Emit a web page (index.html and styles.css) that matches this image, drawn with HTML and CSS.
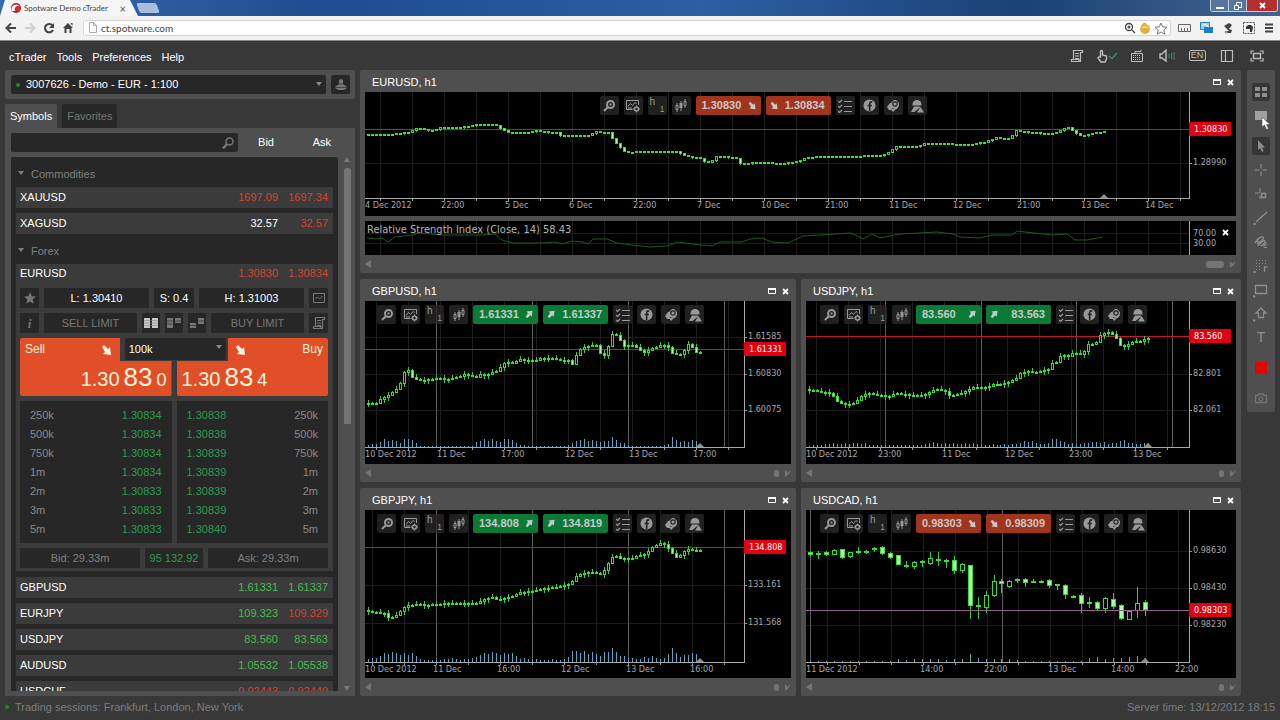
FILE: index.html
```html
<!DOCTYPE html>
<html lang="en">
<head>
    <meta charset="UTF-8">
    <meta name="viewport" content="width=device-width, initial-scale=1.0">
    <title>Spotware Demo cTrader</title>
    <link rel="stylesheet" href="styles.css">
</head>
<body>
    <!-- Icon set -->
    <svg class="sprite" aria-hidden="true">
        <symbol id="i-arrow-dn" viewBox="0 0 12 12"><path d="M1 3l2-2 4 4 2-2 1 8-8-1 2-2z" fill="currentColor"/></symbol>
        <symbol id="i-arrow-up" viewBox="0 0 12 12"><path d="M1 9l2 2 4-4 2 2 1-8-8 1 2 2z" fill="currentColor"/></symbol>
        <symbol id="i-zoom" viewBox="0 0 14 14"><circle cx="8.5" cy="5.5" r="3.5" fill="none" stroke="currentColor" stroke-width="2"/><path d="M6 8l-4 4M7.5 5.5h2M8.5 4.5v2" stroke="currentColor" stroke-width="2"/></symbol>
        <symbol id="i-search" viewBox="0 0 14 14"><circle cx="8.5" cy="5.5" r="3.5" fill="none" stroke="currentColor" stroke-width="1.5"/><path d="M6 8l-4 4.500" stroke="currentColor" stroke-width="2.500"/></symbol>
        <symbol id="i-template" viewBox="0 0 14 14"><path d="M6.500 10.500H.500v-9h12V6M2 7.500l2.500-3 2 2 2.500-3 1.500 1M2 9h4" fill="none" stroke="currentColor"/><circle cx="10.500" cy="10" r="2" fill="none" stroke="currentColor" stroke-width="1.600"/><path d="M10.500 6.500v1.500M10.500 12v1.500M7 10h1.500M12.500 10H14" stroke="currentColor"/></symbol>
        <symbol id="i-candles" viewBox="0 0 14 14"><path d="M3 4v9M7 2v10M11 0v9" stroke="currentColor"/><path d="M2 6.500h2v4H2zM10 2.500h2v4h-2z" fill="#262626" stroke="currentColor"/><path d="M5.500 4h3v5h-3z" fill="currentColor"/></symbol>
        <symbol id="i-checks" viewBox="0 0 14 14"><path d="M0 2l1.500 1.500L4 1M0 7l1.500 1.500L4 6M0 12l1.500 1.500L4 11M6 2.500h8M6 7.500h8M6 12.500h8" fill="none" stroke="currentColor" stroke-width="1.200"/></symbol>
        <symbol id="i-func" viewBox="0 0 14 14"><circle cx="7" cy="7" r="6.500" fill="currentColor"/><path d="M10 3.500c-2-1-2.800 0-2.800 2V13M5 7h4.500" fill="none" stroke="#222" stroke-width="1.700"/></symbol>
        <symbol id="i-shapes" viewBox="0 0 14 14"><path d="M1 8l3-4h2v7H3z" fill="currentColor"/><path d="M5 9V4l3-3h2l3 3v3l-2 3H9z" fill="currentColor"/><circle cx="9" cy="5" r="2.200" fill="none" stroke="#222" stroke-width="1.200"/><path d="M5 10l5 0-3 3z" fill="currentColor"/></symbol>
        <symbol id="i-person" viewBox="0 0 14 14"><path d="M2.500 5.500a4.500 4.500 0 0 1 9 0v1h-9z" fill="currentColor"/><path d="M4 7.500h6v1L4.500 13H1l1-2zM10.500 8L14 13.500H7z" fill="currentColor"/></symbol>
        <symbol id="i-max" viewBox="0 0 8 7"><path d="M.5.5h7v5h-7z" fill="none" stroke="#fff"/><path d="M0 0h8v2H0z" fill="#fff"/></symbol>
        <symbol id="i-close" viewBox="0 0 7 7"><path d="M1 1l5 5M6 1L1 6" stroke="#fff" stroke-width="1.800"/></symbol>
        <symbol id="i-left" viewBox="0 0 6 8"><path d="M6 0v8L0 4z" fill="currentColor"/></symbol>
        <symbol id="i-end" viewBox="0 0 8 8"><path d="M1 0v8l4-3 3-5-4 3z" fill="currentColor"/></symbol>
        <symbol id="i-scroll" viewBox="0 0 14 14"><path d="M3.500 1.500h9v2h-2v9h-9v-2h2zM5 4.500h4M5 7h4M5 9.500h4M2 10.500h7v2" fill="none" stroke="currentColor" stroke-width="1.200"/></symbol>
    </svg>

    <header class="browser">
        <div class="titlebar">
            <div class="browser-tab">
                <svg width="10" height="10" viewBox="0 0 10 10" aria-hidden="true"><circle cx="5" cy="5" r="5" fill="#c4161c"/><path d="M1 8a4 4 0 0 1 8-4 3 3 0 0 0-5 1 2 2 0 0 0 2 3z" fill="#fff"/><circle cx="7" cy="6" r="2" fill="#d9363b"/></svg>
                <span class="browser-tab-title">Spotware Demo cTrader</span>
                <button class="tab-close" aria-label="Close tab">×</button>
            </div>
            <button class="new-tab" aria-label="New tab"></button>
            <div class="window-buttons">
                <button aria-label="Minimize"><svg width="8" height="8"><path d="M0 5h8v2H0z" fill="#fff"/></svg></button>
                <button aria-label="Restore"><svg width="8" height="8"><path d="M2.500 3V.5h5v5H5M.5 3.500h4v4h-4z" fill="none" stroke="#fff"/></svg></button>
                <button class="window-close" aria-label="Close window"><svg width="7" height="7"><use href="#i-close"/></svg></button>
            </div>
        </div>
        <div class="addressbar">
            <button aria-label="Back"><svg width="12" height="12"><path d="M11 6H2M6 1.500L1.500 6 6 10.500" fill="none" stroke="#444" stroke-width="2"/></svg></button>
            <button aria-label="Forward"><svg width="12" height="12"><path d="M1 6h9M6 1.500L10.500 6 6 10.500" fill="none" stroke="#d0d0d0" stroke-width="2"/></svg></button>
            <button aria-label="Reload"><svg width="12" height="12"><path d="M9.500 3.500A4.200 4.200 0 1 0 10 8" fill="none" stroke="#444" stroke-width="2"/><path d="M11 1v5H6z" fill="#444"/></svg></button>
            <button aria-label="Home"><svg width="12" height="12"><path d="M6 1l5 5H9.500v5h-2V7h-3v4h-2V6H1zM8.500 1h2v3z" fill="#444"/></svg></button>
            <div class="omnibox">
                <svg width="10" height="12" aria-hidden="true"><path d="M1.500.5h4l3 3v7h-7zM5.500.5v3h3" fill="#fff" stroke="#aaa"/></svg>
                <input type="text" aria-label="Address" value="ct.spotware.com">
                <svg width="12" height="12" aria-hidden="true"><circle cx="5" cy="5" r="3.500" fill="none" stroke="#444" stroke-width="1.300"/><path d="M3.500 5h3M5 3.500v3M8 8l3 3" stroke="#444" stroke-width="1.300"/></svg>
                <svg width="12" height="12" aria-hidden="true"><path d="M3 4a2.500 2.500 0 0 1 4-2" fill="none" stroke="#888"/><circle cx="6" cy="7" r="5" fill="#e0b040"/><path d="M2 6c2-2 6-2 8 0z" fill="#f6dd8c"/></svg>
                <svg width="14" height="13" aria-hidden="true"><path d="M7 1l1.700 3.800 4.300.4-3.200 2.800 1 4.200L7 10l-3.800 2.200 1-4.200L1 5.200l4.300-.4z" fill="#fff" stroke="#777"/></svg>
            </div>
            <div class="extensions">
                <button aria-label="Ruler"><svg width="13" height="12"><path d="M.5 2.500h12v7H.5zM3.500 9V6M6.500 9V6M9.500 9V6" fill="none" stroke="#666"/></svg></button>
                <button aria-label="Screens"><svg width="13" height="13"><path d="M.5.500h9v7h-9z" fill="#9fd0ef" stroke="#2380bd"/><path d="M4 5h9v6H4z" fill="#1f7fc0"/><path d="M2 4l3-2 4 3" fill="none" stroke="#fff"/></svg></button>
                <button aria-label="Robot"><svg width="12" height="13"><path d="M2 4l5-3 3 2-3 4 3 1-1 3H4v-2h3L4 6z" fill="#444"/><circle cx="4" cy="10" r="1.500" fill="#999"/></svg></button>
                <button aria-label="Notes"><svg width="12" height="13"><path d="M.5.500h11v11H.5z" fill="none" stroke="#555" stroke-dasharray="2 1"/><path d="M3 5l2-2h3l2 2-1 5H7V7H3z" fill="#333"/></svg></button>
                <button aria-label="Menu"><svg width="10" height="12"><path d="M1 2.500h8M1 6h8M1 9.500h8" stroke="#444" stroke-width="2"/></svg></button>
            </div>
        </div>
    </header>

    <nav class="menubar">
        <a href="#">cTrader</a>
        <a href="#">Tools</a>
        <a href="#">Preferences</a>
        <a href="#">Help</a>
        <div class="menu-tools">
            <button aria-label="Journal"><svg width="14" height="14"><use href="#i-scroll"/></svg></button>
            <button aria-label="Quick trade"><svg width="22" height="14"><path d="M4.500 8V2.500a1 1 0 0 1 2 0V6l4 1v3l-1.500 3h-4L2 9l1-1z" fill="none" stroke="currentColor" stroke-width="1.400"/><path d="M13 7l3 2.500L21 4" fill="none" stroke="#3c8c5e" stroke-width="1.500"/></svg></button>
            <button aria-label="Hotkeys"><svg width="14" height="14"><path d="M1.500 4.500h11v8h-11zM5 4.500V2.500h6V1" fill="none" stroke="currentColor"/><path d="M3 6.500h8M3 8.500h8M3 10.500h8" stroke="currentColor" stroke-dasharray="1 1"/></svg></button>
            <button aria-label="Sound"><svg width="18" height="14"><path d="M2 5h2l4-4v11L4 9H2z" fill="none" stroke="currentColor" stroke-width="1.400"/><path d="M11 5v4M13.500 4v6M16 3v8" stroke="#3c8c5e"/></svg></button>
            <button aria-label="Language"><span class="lang">EN</span></button>
            <button aria-label="Layout"><svg width="14" height="14"><path d="M1.500 1.500h11v11h-11zM5.500 1.500v11" fill="none" stroke="currentColor" stroke-width="1.200"/></svg></button>
            <button aria-label="Full screen"><svg width="14" height="14"><path d="M3.500 4.500h7v5h-7z" fill="none" stroke="currentColor" stroke-width="1.500"/><path d="M1 5V2h3M10 2h3v3M13 9v3h-3M4 12H1V9" fill="none" stroke="currentColor" stroke-width="1.200"/></svg></button>
        </div>
    </nav>

    <main class="workspace">
        <aside class="sidebar">
            <div class="account">
                <div class="account-select">
                    <select aria-label="Account">
                        <option>3007626 - Demo - EUR - 1:100</option>
                    </select>
                </div>
                <button class="account-user" aria-label="Account details"><svg width="14" height="14"><path d="M5 2l2-1 2 1v4l4 3v1l-3 2H4l-3-2V9l4-3z" fill="#777"/><path d="M1 9.500h12M5 6h4" stroke="#444"/></svg></button>
            </div>

            <div class="tabs">
                <button class="tab active">Symbols</button>
                <button class="tab">Favorites</button>
            </div>

            <section class="symbols">
                <div class="symbols-head">
                    <div class="search-box">
                        <input type="text" aria-label="Search symbols">
                        <svg width="14" height="14" aria-hidden="true"><use href="#i-search"/></svg>
                    </div>
                    <span>Bid</span>
                    <span>Ask</span>
                </div>
                <div class="symbols-body">
                    <div class="symbol-list">
                        <button class="group-title">Commodities</button>
                        <table class="quotes">
                            <tr><th>XAUUSD</th><td class="down">1697.09</td><td class="down">1697.34</td></tr>
                            <tr><th>XAGUSD</th><td>32.57</td><td class="down">32.57</td></tr>
                        </table>
                        <button class="group-title">Forex</button>

                        <!-- Expanded symbol -->
                        <div class="expanded">
                            <table class="quotes">
                                <tr><th>EURUSD</th><td class="down">1.30830</td><td class="down">1.30834</td></tr>
                            </table>
                            <div class="stat-row">
                                <button class="cell" aria-label="Favorite"><svg width="12" height="12"><path d="M6 0l1.700 4.200 4.300.3-3.300 2.800 1 4.500L6 9.500l-3.700 2.300 1-4.500L0 4.500l4.300-.3z" fill="currentColor"/></svg></button>
                                <span class="cell">L: 1.30410</span>
                                <span class="cell">S: 0.4</span>
                                <span class="cell">H: 1.31003</span>
                                <button class="cell" aria-label="Open chart"><svg width="14" height="12"><path d="M1 1.500h12M1.500 2v8.500h11V2M3.500 7l2-2 2 2 3-3" fill="none" stroke="currentColor"/></svg></button>
                            </div>
                            <div class="limit-row">
                                <button class="cell info" aria-label="Symbol info">i</button>
                                <button class="cell">SELL LIMIT</button>
                                <button class="cell lit" aria-label="Full depth"><svg width="14" height="12"><path d="M0 1h6v10H0zM8 1h6v10H8z" fill="currentColor"/><path d="M0 3.500h14M0 6h14M0 8.500h14" stroke="#888" stroke-width=".6"/></svg></button>
                                <button class="cell" aria-label="Price depth"><svg width="14" height="12"><path d="M0 1h6v10H0zM8 1h6v5H8z" fill="currentColor"/><path d="M0 4h14M0 7h6" stroke="#262626" stroke-width=".6"/></svg></button>
                                <button class="cell" aria-label="Average depth"><svg width="14" height="12"><path d="M0 6h6v5H0zM8 1h6v6H8z" fill="currentColor"/><path d="M0 8.500h6M8 4h6" stroke="#262626" stroke-width=".6"/></svg></button>
                                <button class="cell">BUY LIMIT</button>
                                <button class="cell" aria-label="Order journal"><svg width="14" height="14"><use href="#i-scroll"/></svg></button>
                            </div>
                            <div class="deal">
                                <button class="deal-side sell">
                                    <span class="deal-head"><span>Sell</span><svg width="12" height="12"><use href="#i-arrow-dn"/></svg></span>
                                    <span class="deal-price"><span>1.30</span><b>83</b><small>0</small></span>
                                </button>
                                <button class="deal-side buy">
                                    <span class="deal-head"><svg width="12" height="12"><use href="#i-arrow-dn"/></svg><span>Buy</span></span>
                                    <span class="deal-price"><span>1.30</span><b>83</b><small>4</small></span>
                                </button>
                                <div class="amount">
                                    <select aria-label="Amount">
                                        <option>100k</option>
                                    </select>
                                </div>
                            </div>
                            <div class="depth">
                                <table>
                                    <tr><th>250k</th><td>1.30834</td></tr>
                                    <tr><th>500k</th><td>1.30834</td></tr>
                                    <tr><th>750k</th><td>1.30834</td></tr>
                                    <tr><th>1m</th><td>1.30834</td></tr>
                                    <tr><th>2m</th><td>1.30833</td></tr>
                                    <tr><th>3m</th><td>1.30833</td></tr>
                                    <tr><th>5m</th><td>1.30833</td></tr>
                                </table>
                                <table>
                                    <tr><td>1.30838</td><th>250k</th></tr>
                                    <tr><td>1.30838</td><th>500k</th></tr>
                                    <tr><td>1.30839</td><th>750k</th></tr>
                                    <tr><td>1.30839</td><th>1m</th></tr>
                                    <tr><td>1.30839</td><th>2m</th></tr>
                                    <tr><td>1.30839</td><th>3m</th></tr>
                                    <tr><td>1.30840</td><th>5m</th></tr>
                                </table>
                            </div>
                            <div class="volume-row">
                                <span class="cell">Bid: 29.33m</span>
                                <span class="cell green">95 132.92</span>
                                <span class="cell">Ask: 29.33m</span>
                            </div>
                        </div>

                        <table class="quotes">
                            <tr><th>GBPUSD</th><td class="up">1.61331</td><td class="up">1.61337</td></tr>
                            <tr><th>EURJPY</th><td class="up">109.323</td><td class="down">109.329</td></tr>
                            <tr><th>USDJPY</th><td class="up">83.560</td><td class="up">83.563</td></tr>
                            <tr><th>AUDUSD</th><td class="up">1.05532</td><td class="up">1.05538</td></tr>
                            <tr><th>USDCHF</th><td class="down">0.92443</td><td class="down">0.92449</td></tr>
                        </table>
                    </div>
                    <div class="scrollbar" aria-hidden="true">
                        <i class="scroll-up"></i>
                        <i class="scroll-thumb"></i>
                        <i class="scroll-down"></i>
                    </div>
                </div>
            </section>
        </aside>

        <!-- Chart panels are filled in by charts.js -->
        <div class="charts" id="charts"></div>

        <div class="toolbox" role="toolbar" aria-label="Drawing tools">
            <button class="on" aria-label="Multi-chart mode"><svg width="12" height="10"><path d="M0 0h5v4H0zM7 0h5v4H7zM0 6h5v4H0zM7 6h5v4H7z" fill="currentColor"/></svg></button>
            <button class="lit" aria-label="Single-chart mode"><svg width="12" height="10"><path d="M0 0h12v9H0z" fill="currentColor"/></svg><svg class="cursor" width="11" height="14"><path d="M1 1v10l2.500-2 2 4.500 2-1-2-4H9z" fill="#fff" stroke="#555" stroke-width=".6"/></svg></button>
            <button class="on gap" aria-label="Cursor"><svg width="10" height="12"><path d="M2 0v10l2.200-2L6 12l1.600-.8L6 7.400h3z" fill="currentColor"/></svg></button>
            <button aria-label="Crosshair"><svg width="12" height="12"><path d="M6 0v4.500M6 7.500V12M0 6h4.500M7.500 6H12" stroke="currentColor" stroke-width="1.200"/></svg></button>
            <button aria-label="Marker"><svg width="12" height="12"><path d="M5 0v4.500M0 5h4.500M5 8v3" stroke="currentColor"/><path d="M6.500 5.500h4v4h-4z" fill="none" stroke="currentColor" stroke-width="1.500"/></svg></button>
            <button aria-label="Line"><svg width="16" height="16"><path d="M3 12L14 2" stroke="currentColor" stroke-width="1.300"/><circle cx="1.500" cy="14" r="1.200" fill="currentColor"/></svg></button>
            <button aria-label="Channel"><svg width="14" height="14"><path d="M1 8c2-4 6-7 8-6s-3 5-6 7m1 2c3-4 6-6 7-5s-2 4-4 5M2 5l3 3" fill="none" stroke="currentColor" stroke-width="1.300"/><path d="M13 8h-3v4.500h3M10 10h3" fill="none" stroke="currentColor"/></svg></button>
            <button aria-label="Fibonacci"><svg width="16" height="16"><path d="M3 2.500h12M3 5.500h12M3 8.500h6M3 11.500h6" stroke="currentColor" stroke-dasharray="1 2"/><path d="M11.500 14V9h3" fill="none" stroke="currentColor" stroke-width="1.300"/><circle cx="1.500" cy="14" r="1.200" fill="currentColor"/></svg></button>
            <button aria-label="Rectangle"><svg width="16" height="16"><path d="M2.500 3.500h11v8h-11z" fill="none" stroke="currentColor" stroke-width="1.300"/><circle cx="1.200" cy="14.500" r="1.200" fill="currentColor"/></svg></button>
            <button aria-label="Arrow"><svg width="16" height="16"><path d="M8 2l5 5h-2.500v4.500h-5V7H3z" fill="none" stroke="currentColor" stroke-width="1.300"/><circle cx="1.200" cy="14.500" r="1.200" fill="currentColor"/></svg></button>
            <button class="text-tool" aria-label="Text">T</button>
            <button class="swatch" aria-label="Colour"><span></span></button>
            <button class="camera" aria-label="Screenshot"><svg width="14" height="11"><path d="M1.500 2.500h2.500l1-1.500h4l1 1.500h2.500v7h-11z" fill="none" stroke="currentColor" stroke-width="1.300"/><circle cx="7" cy="6" r="2" fill="none" stroke="currentColor"/></svg></button>
        </div>
    </main>

    <footer class="statusbar">
        <span class="sessions">Trading sessions: Frankfurt, London, New York</span>
        <span>Server time: 13/12/2012 18:15</span>
    </footer>

    <script src="charts.js"></script>
</body>
</html>
```

FILE: styles.css
```css
* {
    box-sizing: border-box;
}
body {
    margin: 0;
    height: 100vh;
    display: flex;
    flex-direction: column;
    background: #383838;
    color: #fff;
    font-family: "Liberation Sans", Arial, sans-serif;
    font-size: 11px;
    line-height: 13px;
}
button, input, select {
    font: inherit;
    color: inherit;
    border: 0;
    padding: 0;
    margin: 0;
    background: none;
    border-radius: 0;
}
button {
    display: flex;
    align-items: center;
    justify-content: center;
}
select {
    appearance: none;
    width: 100%;
    height: 100%;
}
svg {
    display: block;
    flex: none;
}
.sprite {
    position: absolute;
    width: 0;
    height: 0;
}

/* browser frame */
.browser {
    background: #f2f2f2;
    border-bottom: 1px solid #8a8a8a;
    font-family: Lato, "Open Sans", sans-serif;
}
.titlebar {
    height: 16px;
    display: flex;
    align-items: flex-end;
    background: linear-gradient(90deg, #3a6cac 0%, #1e4c90 25%, #2c5fa3 55%, #1a4276 80%, #41648f 100%);
}
.browser-tab {
    width: 138px;
    height: 16px;
    padding: 0 12px 0 11px;
    display: flex;
    align-items: center;
    gap: 3px;
    background: #f5f5f5;
    color: #444;
    clip-path: polygon(0 100%, 5px 0, 130px 0, 100% 100%);
}
.browser-tab-title {
    flex: 1;
    font-size: 8px;
    white-space: nowrap;
}
.tab-close {
    color: #555;
    font-size: 11px;
    line-height: 11px;
}
.new-tab {
    width: 20px;
    height: 10px;
    margin-bottom: 3px;
    background: #a9bfdd;
    border-radius: 2px;
    transform: skewX(20deg);
}
.window-buttons {
    margin: 0 2px 0 auto;
    align-self: flex-start;
    display: flex;
    border: 1px solid #c3cedd;
    border-top: 0;
    border-radius: 0 0 3px 3px;
    overflow: hidden;
}
.window-buttons button {
    width: 18px;
    height: 11px;
    background: #56769f;
    border-right: 1px solid #c3cedd;
}
.window-buttons .window-close {
    width: 30px;
    background: #b5302c;
    border-right: 0;
}
.addressbar {
    height: 24px;
    padding: 0 6px 0 5px;
    display: flex;
    align-items: center;
    gap: 7px;
}
.omnibox {
    flex: 1;
    height: 16px;
    margin-left: 2px;
    padding: 0 2px 0 4px;
    display: flex;
    align-items: center;
    gap: 3px;
    background: #fff;
    border: 1px solid #d5d5d5;
    border-radius: 2px;
}
.omnibox input {
    flex: 1;
    color: #444;
    font-size: 10px;
    height: 14px;
}
.extensions {
    display: flex;
    gap: 9px;
}

/* top menu */
.menubar {
    height: 29px;
    padding: 3px 8px 0 9px;
    display: flex;
    align-items: center;
    gap: 10px;
}
.menubar a {
    color: #fff;
    text-decoration: none;
}
.menu-tools {
    margin: 0 0 3px auto;
    display: flex;
    align-items: center;
    color: #bdbdbd;
}
.menu-tools button {
    width: 30px;
}
.lang {
    width: 17px;
    height: 11px;
    border: 1px solid #bdbdbd;
    border-radius: 2px;
    font-size: 9px;
    line-height: 9px;
}

.workspace {
    flex: 1;
    min-height: 0;
    padding: 0 5px;
    display: grid;
    grid-template-columns: 350px minmax(0, 1fr) 29px;
    grid-template-rows: minmax(0, 1fr);
    gap: 5px;
}

/* left panel */
.sidebar {
    min-height: 0;
    display: flex;
    flex-direction: column;
}
.account {
    padding: 5px;
    padding-left: 6px;
    display: flex;
    gap: 5px;
    background: #4f4f4f;
    border-radius: 2px;
}
.account-select, .amount {
    position: relative;
    flex: 1;
    height: 19px;
    background: #272727;
    border-radius: 2px;
}
.account-select select {
    padding-left: 15px;
}
.account-select::before {
    content: "";
    position: absolute;
    left: 5px;
    top: 8px;
    width: 4px;
    height: 4px;
    border-radius: 2px;
    background: #1f8a2c;
}
.account-select::after, .amount::after {
    content: "";
    position: absolute;
    right: 4px;
    top: 7px;
    border: 3px solid transparent;
    border-top: 4px solid #888;
    border-bottom: 0;
}
.account-user {
    width: 19px;
    height: 19px;
    background: #272727;
    border-radius: 2px;
}
.tabs {
    margin-top: 5px;
    display: flex;
    gap: 5px;
}
.tab {
    height: 24px;
    padding: 0 5px;
    background: #272727;
    color: #777;
    border-radius: 2px 2px 0 0;
}
.tab.active {
    background: #4f4f4f;
    color: #fff;
}
.symbols {
    flex: 1;
    min-height: 0;
    padding: 5px 0 5px 6px;
    display: flex;
    flex-direction: column;
    gap: 5px;
    background: #4f4f4f;
}
.symbols-head {
    padding-right: 24px;
    display: flex;
    align-items: center;
}
.symbols-head span {
    width: 57px;
    text-align: right;
}
.symbols-head span:nth-of-type(1) {
    width: 36px;
}
.search-box {
    flex: 1;
    height: 19px;
    padding-right: 3px;
    display: flex;
    align-items: center;
    background: #272727;
    border-radius: 2px;
    color: #777;
}
.search-box input {
    flex: 1;
    height: 19px;
    padding-left: 5px;
    color: #fff;
}
.symbols-body {
    flex: 1;
    min-height: 0;
    padding-right: 4px;
    display: flex;
    gap: 5px;
}
.symbol-list {
    flex: 1;
    padding: 5px 5px 0;
    overflow: hidden;
    background: #272727;
    border-radius: 2px 2px 0 0;
}
.group-title {
    height: 25px;
    gap: 7px;
    padding-left: 2px;
    color: #808080;
}
.group-title::before {
    content: "";
    margin-bottom: 4px;
    border: 3px solid transparent;
    border-top: 4px solid #808080;
    border-bottom: 0;
}
.quotes {
    width: 100%;
    border-spacing: 0;
}
.quotes th, .quotes td {
    height: 26px;
    padding: 0;
    background: #3b3b3b;
    border-bottom: 5px solid #272727;
    text-align: right;
    font-weight: normal;
}
.quotes th {
    padding-left: 4px;
    text-align: left;
}
.quotes td {
    width: 50px;
}
.quotes td:last-child {
    width: 55px;
    padding-right: 5px;
}
.quotes .up {
    color: #45bd52;
}
.quotes .down {
    color: #d4442f;
}
.expanded {
    padding-bottom: 3px;
    margin-bottom: 6px;
    background: #3b3b3b;
}
.expanded .quotes th, .expanded .quotes td {
    height: 19px;
    border-bottom: 0;
}
.stat-row, .limit-row, .deal, .depth, .volume-row {
    margin: 5px 5px 0 4px;
    display: grid;
    gap: 5px;
}
.cell {
    height: 20px;
    display: flex;
    align-items: center;
    justify-content: center;
    background: #272727;
    border-radius: 1px;
}
.stat-row {
    grid-template-columns: 19px 1fr 40px 1fr 19px;
}
.stat-row button, .limit-row button {
    color: #777;
}
.limit-row {
    grid-template-columns: 19px 1fr 18px 18px 18px 1fr 19px;
}
.limit-row .lit {
    color: #c8c8c8;
}
.info {
    font-family: "Liberation Serif", serif;
    font-size: 13px;
    font-weight: bold;
    font-style: italic;
}
.volume-row {
    grid-template-columns: 1fr 58px 1fr;
    color: #808080;
}
.volume-row .green {
    color: #2a9d52;
}
.deal {
    grid-template-columns: 1fr 1fr;
    position: relative;
}
.deal-side {
    height: 58px;
    padding: 5px;
    flex-direction: column;
    justify-content: space-between;
    align-items: stretch;
    background: #e04f27;
    border-radius: 2px;
    color: #fff3dc;
}
.sell {
    clip-path: polygon(0 0, 66% 0, 66% 23px, 100% 23px, 100% 100%, 0 100%);
}
.buy {
    clip-path: polygon(34% 0, 100% 0, 100% 100%, 0 100%, 0 23px, 34% 23px);
}
.deal-head {
    width: 62%;
    display: flex;
    align-items: center;
    justify-content: space-between;
    font-size: 12px;
}
.buy .deal-head {
    align-self: flex-end;
}
.deal-price {
    display: flex;
    align-items: baseline;
    justify-content: flex-end;
    gap: 4px;
    font-size: 20px;
    line-height: 22px;
}
.buy .deal-price {
    justify-content: flex-start;
}
.deal-price b {
    font-size: 26px;
    font-weight: normal;
}
.deal-price small {
    font-size: 18px;
}
.amount {
    position: absolute;
    left: 34%;
    right: 33%;
    height: 22px;
}
.amount select {
    padding-left: 4px;
}
.depth {
    grid-template-columns: 1fr 1fr;
}
.depth table {
    height: 142px;
    padding: 5px 10px 4px;
    border-spacing: 0;
    background: #272727;
}
.depth th, .depth td {
    height: 19px;
    padding: 0;
    font-weight: normal;
    text-align: left;
    color: #8a8a8a;
}
.depth td {
    color: #2a9d52;
}
.depth tr :last-child {
    text-align: right;
}
.scrollbar {
    width: 8px;
    display: flex;
    flex-direction: column;
    align-items: center;
    gap: 6px;
}
.scroll-up, .scroll-down {
    border: 3px solid transparent;
}
.scroll-up {
    border-top: 0;
    border-bottom: 5px solid #7a7a7a;
}
.scroll-thumb {
    width: 7px;
    height: 48%;
    background: #757575;
    border-radius: 3px 3px 0 0;
}
.scroll-down {
    margin-top: auto;
    border-bottom: 0;
    border-top: 5px solid #7a7a7a;
}

/* charts */
.charts {
    min-height: 0;
    display: grid;
    grid-template-columns: 436fr 440fr;
    grid-template-rows: 203fr 203fr 208fr;
    gap: 6px 5px;
}
.chart {
    min-height: 0;
    padding: 0 5px;
    display: flex;
    flex-direction: column;
    background: #4f4f4f;
    border-radius: 2px;
}
.chart.wide {
    grid-column: 1 / -1;
}
.chart-head {
    height: 22px;
    padding: 2px 2px 0 7px;
    display: flex;
    align-items: center;
    gap: 6px;
}
.chart-head h2 {
    flex: 1;
    margin: 0;
    font-size: 11px;
    font-weight: normal;
}
.plot {
    position: relative;
    flex: 1;
    min-height: 0;
    background: #000;
    font-family: "DejaVu Sans Condensed", "Noto Sans", sans-serif;
    font-size: 9px;
}
.plot > svg {
    position: absolute;
    width: 100%;
    height: 100%;
}
.plot.rsi {
    flex: none;
    height: 34px;
    margin-top: 5px;
}
.rsi-title {
    position: absolute;
    left: 2px;
    top: 2px;
    font-size: 11px;
    color: #b4b4b4;
}
.rsi-close {
    position: absolute;
    right: 7px;
    top: 8px;
}
.chart-tools {
    position: absolute;
    left: 0;
    right: 75px;
    top: 4px;
    display: flex;
    justify-content: center;
    gap: 5px;
    font-family: "Liberation Sans", Arial, sans-serif;
}
.chart-tools button {
    width: 19px;
    height: 19px;
    background: rgba(40, 40, 40, 0.8);
    border-radius: 2px;
    color: #999;
}
.chart-tools .period {
    padding: 0 2px;
    align-items: stretch;
    justify-content: space-between;
    font-size: 10px;
    line-height: 11px;
}
.period sub {
    align-self: flex-end;
    vertical-align: baseline;
}
.chart-tools .price {
    width: 65px;
    padding: 0 4px 0 6px;
    justify-content: space-between;
    font-size: 11px;
    font-weight: bold;
    color: #c8c8c8;
}
.chart-tools .price.ask {
    padding: 0 6px 0 4px;
}
.chart-tools .price.rise {
    background: #0b7a37;
}
.chart-tools .price.fall {
    background: #a1341d;
}
.chart-scroll {
    height: 18px;
    display: flex;
    align-items: center;
    gap: 5px;
    color: #757575;
}
.thumb {
    width: 5px;
    height: 7px;
    margin-left: auto;
    background: #757575;
    border-radius: 3px;
}
.wide .thumb {
    width: 18px;
}

/* right toolbar */
.toolbox {
    align-self: start;
    width: 28px;
    height: 342px;
    padding-top: 13px;
    display: flex;
    flex-direction: column;
    align-items: center;
    gap: 6px;
    margin-left: 1px;
    background: #4f4f4f;
    border-radius: 2px;
    color: #8e8e8e;
}
.toolbox button {
    position: relative;
    width: 18px;
    height: 18px;
    border-radius: 2px;
}
.toolbox .on {
    background: #363636;
}
.toolbox .lit {
    color: #a0a0a0;
}
.toolbox .gap {
    margin-top: 6px;
}
.toolbox .cursor {
    position: absolute;
    left: 9px;
    top: 9px;
}
.text-tool {
    font-family: "Liberation Mono", monospace;
    font-size: 15px;
}
.toolbox .swatch, .toolbox .camera {
    margin-top: 6px;
}
.swatch span {
    width: 12px;
    height: 12px;
    background: #e60000;
}
.toolbox .camera {
    color: #757575;
}

.statusbar {
    height: 24px;
    padding: 0 5px 2px;
    display: flex;
    align-items: center;
    justify-content: space-between;
    color: #7c7c7c;
}
.sessions {
    display: flex;
    align-items: center;
    gap: 6px;
}
.sessions::before {
    content: "";
    width: 4px;
    height: 4px;
    border-radius: 2px;
    background: #1f8a2c;
}
```

FILE: charts.js
```javascript
// Trend points are [x, y] inside the plot; w and h are the size they were laid out for.
var charts = [
    {
        symbol: 'EURUSD', wide: true, dir: 'fall', bid: '1.30830', ask: '1.30834',
        w: 871, h: 123, axisX: 824, axisY: 105, grid: 15, days: [], wick: 1, last: 739,
        line: 37, lineText: '1.30830', prices: [[70, '1.28990']],
        labels: [[0, '4 Dec 2012'], [76, '22:00'], [140, '5 Dec'], [204, '6 Dec'], [268, '22:00'], [332, '7 Dec'], [396, '10 Dec'], [460, '21:00'], [524, '11 Dec'], [588, '12 Dec'], [652, '21:00'], [716, '13 Dec'], [780, '14 Dec']],
        trend: [[3,42],[17,42],[33,41],[47,39],[51,36],[58,36],[68,38],[77,35],[90,35],[103,34],[113,32],[132,32],[137,36],[147,40],[163,40],[172,38],[193,40],[197,43],[223,43],[228,41],[233,39],[245,40],[250,47],[257,55],[263,60],[273,59],[283,59],[303,58],[315,59],[320,62],[327,64],[337,65],[343,70],[348,69],[353,63],[373,65],[378,72],[387,70],[397,69],[407,70],[423,70],[435,68],[438,67],[443,65],[450,64],[498,63],[503,62],[520,62],[525,60],[532,54],[555,53],[560,51],[585,51],[608,52],[622,49],[632,45],[647,46],[652,38],[662,39],[682,41],[692,40],[702,35],[707,35],[711,40],[718,43],[725,42],[730,40],[739,39]],
        rsi: [[2,17],[10,18],[17,17],[23,21],[30,16],[48,14],[53,12],[77,14],[100,14],[117,14],[130,13],[137,19],[148,22],[167,22],[177,22],[190,21],[197,23],[207,20],[218,21],[223,23],[228,18],[242,18],[252,22],[267,24],[285,26],[302,25],[313,21],[327,23],[347,25],[355,21],[377,21],[385,18],[397,17],[407,21],[423,22],[438,15],[455,14],[485,12],[493,15],[498,18],[507,13],[515,17],[525,15],[535,13],[572,11],[588,13],[595,16],[615,17],[627,14],[647,14],[652,10],[660,11],[688,14],[702,13],[710,19],[722,19],[738,16]]
    },
    {
        symbol: 'GBPUSD', dir: 'rise', bid: '1.61331', ask: '1.61337',
        w: 426, h: 163, axisX: 379, axisY: 146, grid: 11, days: [71, 167, 263, 359], wick: 3, last: 335,
        line: 48, lineText: '1.61331', prices: [[36, '1.61585'], [73, '1.60830'], [109, '1.60075']],
        labels: [[0, '10 Dec 2012'], [72, '11 Dec'], [136, '17:00'], [200, '12 Dec'], [264, '13 Dec'], [328, '17:00']],
        trend: [[3,102],[11,102],[15,101],[18,97],[23,95],[30,90],[35,87],[39,76],[42,68],[46,69],[50,78],[60,79],[75,77],[85,78],[95,76],[100,73],[108,74],[112,77],[115,73],[123,74],[128,71],[135,69],[139,62],[145,61],[150,62],[155,58],[170,60],[177,57],[190,57],[195,59],[205,59],[208,65],[213,54],[217,48],[223,45],[232,43],[235,47],[238,55],[243,54],[246,41],[248,33],[253,34],[258,40],[262,46],[267,43],[273,46],[280,51],[290,47],[300,43],[305,46],[308,52],[315,54],[320,52],[323,43],[328,44],[332,51],[335,52]],
        volume: [[3,2],[11,3],[18,8],[35,5],[42,9],[50,5],[56,1],[108,1],[113,8],[135,6],[143,9],[152,3],[165,1],[200,1],[208,4],[215,9],[228,6],[240,6],[247,9],[255,5],[268,1],[295,1],[303,3],[306,9],[315,6],[332,6],[335,3]]
    },
    {
        symbol: 'USDJPY', dir: 'rise', bid: '83.560', ask: '83.563',
        w: 431, h: 163, axisX: 384, axisY: 146, grid: 10, days: [79, 175, 271, 367], wick: 3, last: 343,
        line: 35, lineText: '83.560', prices: [[73, '82.801'], [109, '82.061']],
        labels: [[0, '10 Dec 2012'], [72, '23:00'], [136, '11 Dec'], [200, '12 Dec'], [264, '23:00'], [328, '13 Dec']],
        trend: [[2,88],[12,90],[20,91],[25,92],[30,96],[35,102],[40,103],[47,103],[52,100],[57,95],[63,92],[72,94],[85,95],[90,92],[102,93],[113,95],[122,93],[128,89],[135,88],[142,90],[145,94],[155,93],[162,89],[168,86],[182,86],[188,83],[198,83],[205,81],[212,78],[218,71],[225,70],[232,71],[247,68],[250,59],[253,61],[258,53],[265,55],[270,51],[278,53],[282,49],[285,43],[292,43],[296,34],[302,32],[307,31],[312,35],[315,41],[318,46],[323,45],[328,41],[340,39],[343,37]],
        volume: [[2,1],[20,3],[58,4],[64,2],[115,2],[125,5],[150,3],[165,4],[180,2],[210,3],[220,6],[240,3],[248,8],[255,8],[262,3],[295,5],[310,3],[316,8],[325,3],[343,4]]
    },
    {
        symbol: 'GBPJPY', dir: 'rise', bid: '134.808', ask: '134.819',
        w: 426, h: 168, axisX: 379, axisY: 152, grid: 7, days: [71, 167, 263, 359], wick: 3, last: 335,
        line: 37, lineText: '134.808', prices: [[75, '133.161'], [113, '131.568']],
        labels: [[0, '10 Dec 2012'], [68, '11 Dec'], [132, '16:00'], [196, '12 Dec'], [261, '13 Dec'], [325, '16:00']],
        trend: [[3,100],[10,102],[22,103],[26,108],[31,106],[35,103],[40,98],[45,95],[57,94],[63,95],[83,93],[103,93],[113,93],[120,89],[130,87],[135,90],[143,87],[150,86],[155,82],[170,81],[177,79],[190,77],[202,75],[208,72],[212,66],[218,63],[230,62],[238,64],[242,58],[247,49],[252,45],[258,48],[268,49],[275,45],[283,44],[287,38],[292,35],[298,33],[303,35],[307,41],[312,47],[318,45],[323,39],[335,40]],
        volume: [[3,3],[10,4],[18,9],[40,9],[50,7],[57,2],[75,2],[85,4],[95,2],[110,4],[116,9],[145,9],[155,4],[180,2],[200,3],[210,12],[235,7],[246,13],[255,8],[265,3],[285,5],[300,4],[306,13],[316,6],[330,9],[335,4]]
    },
    {
        symbol: 'USDCAD', dir: 'fall', bid: '0.98303', ask: '0.98309',
        w: 431, h: 168, axisX: 384, axisY: 152, grid: 21, days: [4, 197], last: 340,
        line: 100, lineColor: '#95608f', lineText: '0.98303', prices: [[41, '0.98630'], [78, '0.98430'], [115, '0.98230']],
        labels: [[0, '11 Dec 2012'], [114, '14:00'], [178, '22:00'], [243, '13 Dec'], [306, '14:00'], [370, '22:00']],
        // high, body top, body bottom, low, filled
        candles: [[41,42,45,46,1],[41,43,45,49,0],[41,42,45,46,1],[39,40,45,45,0],[39,39,48,49,1],[42,42,47,48,0],[37,41,42,44,1],[40,41,43,44,0],[37,38,40,42,0],[36,37,44,45,1],[42,43,48,49,1],[45,45,55,55,1],[51,55,57,58,1],[51,52,57,59,0],[50,51,53,57,1],[42,48,54,55,0],[42,49,51,56,1],[49,50,51,58,1],[46,50,61,64,1],[53,54,61,63,0],[55,55,96,109,1],[87,95,97,109,1],[81,85,98,103,0],[65,71,86,87,0],[69,71,74,83,1],[70,71,77,78,0],[68,69,70,73,0],[68,69,73,77,1],[69,71,73,73,0],[70,71,72,73,1],[69,70,76,78,1],[74,74,75,80,1],[74,75,85,89,1],[85,86,87,88,1],[83,85,94,103,1],[87,92,93,98,1],[91,92,99,100,1],[87,88,99,103,0],[83,89,97,99,1],[94,95,109,110,1],[101,101,110,110,0],[77,93,101,108,0],[90,92,100,106,1]],
        volume: [[4,1],[85,1],[92,3],[150,3],[160,4],[164,8],[168,4],[200,3],[215,1],[280,1],[285,4],[340,5]]
    }
];

function icon(name, size) {
    return '<svg width="' + size + '" height="' + size + '"><use href="#' + name + '"/></svg>';
}

function panel(c) {
    var arrow = icon(c.dir === 'rise' ? 'i-arrow-up' : 'i-arrow-dn', 9);
    var html = '<header class="chart-head"><h2>' + c.symbol + ', h1</h2>' +
        '<button aria-label="Maximize"><svg width="8" height="7"><use href="#i-max"/></svg></button>' +
        '<button aria-label="Close">' + icon('i-close', 7) + '</button></header>' +
        '<div class="plot main"><svg></svg><div class="chart-tools">' +
        '<button aria-label="Zoom">' + icon('i-zoom', 14) + '</button>' +
        '<button aria-label="Template">' + icon('i-template', 14) + '</button>' +
        '<button class="period" aria-label="Period">h<sub>1</sub></button>' +
        '<button aria-label="Chart type">' + icon('i-candles', 14) + '</button>' +
        '<button class="price ' + c.dir + '">' + c.bid + arrow + '</button>' +
        '<button class="price ask ' + c.dir + '">' + arrow + c.ask + '</button>' +
        '<button aria-label="View options">' + icon('i-checks', 14) + '</button>' +
        '<button aria-label="Indicators">' + icon('i-func', 13) + '</button>' +
        '<button aria-label="Objects">' + icon('i-shapes', 14) + '</button>' +
        '<button aria-label="Profile">' + icon('i-person', 14) + '</button>' +
        '</div></div>';
    if (c.rsi) {
        html += '<div class="plot rsi"><svg></svg><span class="rsi-title">Relative Strength Index (Close, 14) 58.43</span>' +
            '<button class="rsi-close" aria-label="Remove indicator">' + icon('i-close', 7) + '</button></div>';
    }
    html += '<div class="chart-scroll"><svg width="6" height="8"><use href="#i-left"/></svg><i class="thumb"></i>' +
        icon('i-end', 7) + '</div>';
    var el = document.createElement('section');
    el.className = 'chart' + (c.wide ? ' wide' : '');
    el.innerHTML = html;
    return el;
}

function at(points, x) {
    for (var i = 1; i < points.length; i++) {
        if (x <= points[i][0]) {
            var a = points[i - 1], b = points[i];
            return a[1] + (b[1] - a[1]) * Math.max(0, x - a[0]) / (b[0] - a[0]);
        }
    }
    return points[points.length - 1][1];
}

function rect(x, y, w, h, attrs) {
    return '<rect x="' + x + '" y="' + y + '" width="' + w + '" height="' + h + '" ' + attrs + '/>';
}

function text(x, y, value, fill) {
    return '<text x="' + x + '" y="' + y + '" fill="' + fill + '">' + value + '</text>';
}

function candle(x, hi, top, bottom, lo, filled, half) {
    var s = rect(x, hi, 1, Math.max(1, lo - hi), 'fill="#2fd02f"');
    if (bottom - top < 2) {
        return s + rect(x - half, top, half * 2 + 1, 2, 'fill="#3be43b"');
    }
    return s + rect(x - half + 0.5, top + 0.5, half * 2, bottom - top - 1,
        'stroke="#35dd35" fill="' + (filled ? '#a4ffa4' : '#000') + '"');
}

function draw(c) {
    var svg = c.el.querySelector('.main svg');
    var w = svg.clientWidth, h = svg.clientHeight;
    var sx = (w - 47) / c.axisX, sy = h / c.h;
    var X = function (v) { return Math.round(v * sx); };
    var Y = function (v) { return Math.round(v * sy); };
    var ax = w - 47, ay = Y(c.axisY), out = '', x, i;

    for (x = c.grid; x < c.axisX; x += 32) {
        out += rect(X(x), 0, 1, ay, 'fill="#1d1d1d"') + rect(X(x), ay, 1, 3, 'fill="#999"');
    }
    c.prices.forEach(function (p) {
        out += rect(0, Y(p[0]), ax, 1, 'fill="#1d1d1d"') + rect(ax, Y(p[0]), 3, 1, 'fill="#999"');
        out += text(ax + 4, Y(p[0]) + 2, p[1], '#a8a8a8');
    });
    c.days.forEach(function (d) {
        out += rect(X(d), 0, 1, ay, 'fill="#5c5c5c"');
    });
    if (c.volume) {
        for (x = c.candles ? 4 : 3; x <= c.last; x += c.candles ? 8 : 4) {
            var v = Math.max(1, Math.round(at(c.volume, x) * (0.8 + (x * 7 % 5) / 12)));
            out += rect(X(x), ay - v, 1, v, 'fill="#5fa6c4"');
        }
    }
    // the wide chart keeps its price line behind the candles
    var ly = Y(c.line);
    out += rect(0, ly, ax, 1, 'fill="' + (c.lineColor || '#c41a28') + '"');
    if (c.candles) {
        for (i = 0; i < c.candles.length; i++) {
            var k = c.candles[i];
            out += candle(X(4 + i * 8), Y(k[0]), Y(k[1]), Y(k[2]), Y(k[3]), k[4], 2);
        }
        out += rect(0, ly, ax, 1, 'fill="' + c.lineColor + '"');
    } else {
        for (x = 3; x <= c.last; x += 4) {
            var a = Y(at(c.trend, x - 2)), b = Y(at(c.trend, x + 2));
            var top = Math.min(a, b), bottom = Math.max(a, b) + 1;
            var up = x * 13 % 7 > 3 ? c.wick : 1, dn = x * 11 % 5 > 2 ? c.wick : 0;
            if (c.wide) { up = 0; dn = x % 3 ? 0 : 1; }
            out += candle(X(x), top - up, top, bottom, bottom + dn, b > a, 1);
        }
    }
    out += rect(0, ay, ax + 1, 1, 'fill="#a8a8a8"') + rect(ax, 0, 1, ay + 1, 'fill="#a8a8a8"');
    out += '<path d="M' + (X(c.last) - 4) + ' ' + ay + 'l4-4 4 4z" fill="#8f8f8f"/>';
    out += rect(ax, ly - 7, 42, 14, 'rx="1" fill="#e00010"') + text(ax + 5, ly + 3, c.lineText, '#fff');
    c.labels.forEach(function (l) {
        out += text(X(l[0]), ay + 10, l[1], '#a8a8a8');
    });
    svg.innerHTML = out;

    if (c.rsi) {
        svg = c.el.querySelector('.rsi svg');
        out = '';
        for (x = c.grid; x < c.axisX; x += 32) {
            out += rect(X(x), 0, 1, 34, 'fill="#1d1d1d"');
        }
        out += rect(0, 12, ax, 1, 'fill="#1d1d1d"') + rect(0, 22, ax, 1, 'fill="#1d1d1d"');
        out += '<polyline fill="none" stroke="#1c5a24" points="' + c.rsi.map(function (p) {
            return X(p[0]) + ',' + p[1];
        }).join(' ') + '"/>';
        out += rect(ax, 0, 1, 34, 'fill="#a8a8a8"');
        out += text(ax + 4, 15, '70.00', '#a8a8a8') + text(ax + 4, 25, '30.00', '#a8a8a8');
        svg.innerHTML = out;
    }
}

var holder = document.getElementById('charts');
charts.forEach(function (c) {
    c.el = holder.appendChild(panel(c));
});

function drawAll() {
    charts.forEach(draw);
}
drawAll();
window.addEventListener('resize', drawAll);
```
